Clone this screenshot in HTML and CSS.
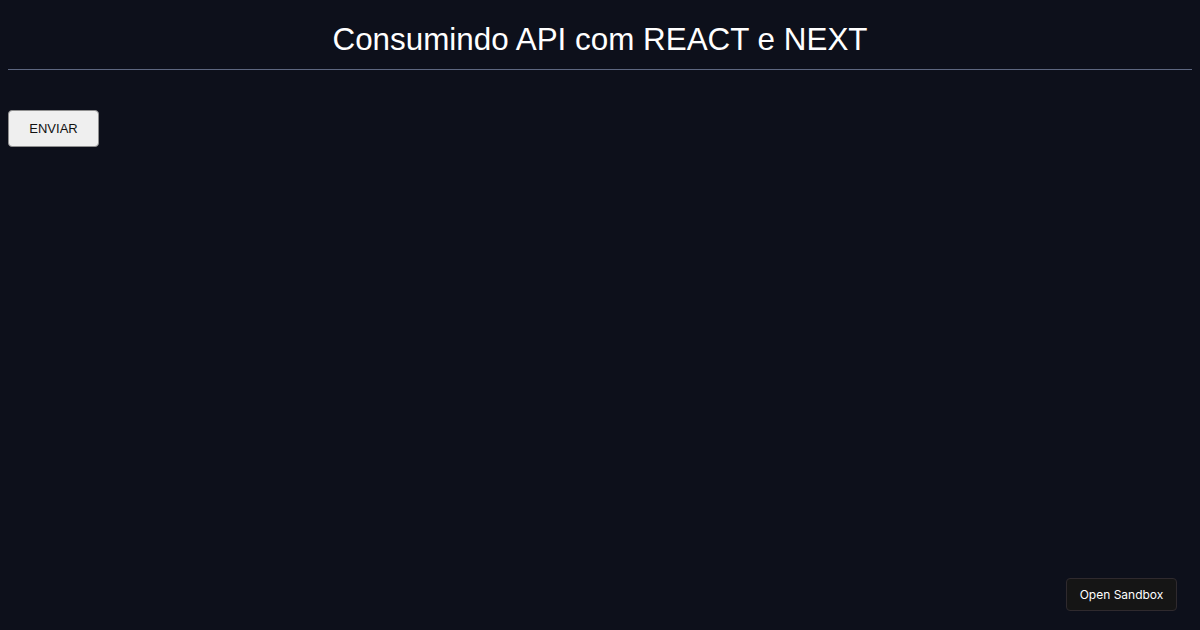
FILE: index.html
```html
<!DOCTYPE html>
<html lang="pt">
<head>
<meta charset="utf-8">
<title>Consumindo API com REACT e NEXT</title>
<link rel="stylesheet" href="styles.css">
</head>
<body>
<header class="header">
  <h1 class="title">Consumindo API com REACT e NEXT</h1>
</header>
<main class="main">
  <button class="send" type="button">ENVIAR</button>
</main>
<a class="sandbox" href="#">Open Sandbox</a>
</body>
</html>
```

FILE: styles.css
```css
html, body {
  margin: 0;
  padding: 0;
  height: 100%;
}
body {
  background: #0d101b;
  color: #ffffff;
  font-family: "Liberation Sans", Arial, sans-serif;
}
.header {
  margin: 0 8px;
  padding-top: 21px;
  border-bottom: 1px solid #5d6780;
}
.title {
  margin: 0;
  font-size: 31.4px;
  font-weight: 400;
  line-height: 37px;
  padding-bottom: 11px;
  text-align: center;
}
.main {
  padding: 40px 8px;
}
.send {
  width: 91px;
  height: 37px;
  background: #efefef;
  color: #111111;
  border: 1px solid #8f8f8f;
  border-radius: 4px;
  font-family: "Liberation Sans", Arial, sans-serif;
  font-size: 13px;
  padding: 0;
}
.sandbox {
  position: fixed;
  right: 23px;
  bottom: 19px;
  width: 111px;
  height: 33px;
  box-sizing: border-box;
  display: flex;
  align-items: center;
  justify-content: center;
  background: #151515;
  border: 1px solid #2f2a2e;
  border-radius: 4px;
  color: #ffffff;
  font-family: Inter, "Liberation Sans", sans-serif;
  font-size: 12px;
  text-decoration: none;
}
```
